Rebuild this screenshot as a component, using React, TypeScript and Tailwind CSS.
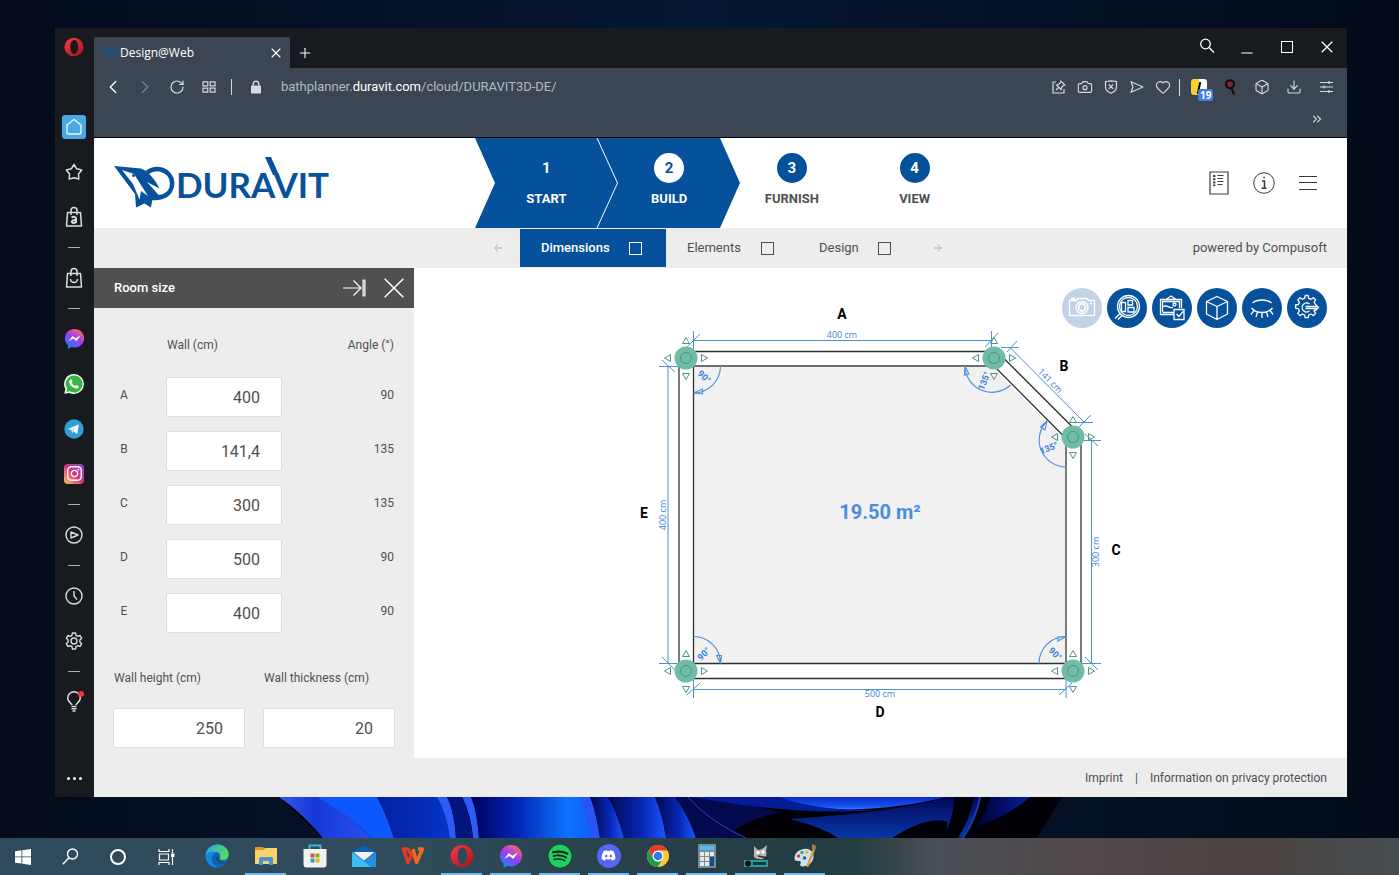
import type { ReactNode } from "react";
import {
  Box,
  Camera,
  ChevronLeft,
  ChevronRight,
  ChevronsRight,
  Download,
  Heart,
  Minus,
  Plus,
  RotateCw,
  X,
} from "lucide-react";
import { FaDiscord, FaSpotify, FaInstagram } from "react-icons/fa";

const walls = [
  { id: "A", length: "400", angle: "90" },
  { id: "B", length: "141,4", angle: "135" },
  { id: "C", length: "300", angle: "135" },
  { id: "D", length: "500", angle: "90" },
  { id: "E", length: "400", angle: "90" },
];

const nodes = [
  [686, 358],
  [994, 358],
  [1073, 437],
  [1073, 671],
  [686, 671],
];

function OperaIcon({ id, size }: { id: string; size: number }) {
  return (
    <svg width={size} height={size} viewBox="0 0 24 24">
      <defs>
        <linearGradient id={id} x1="0" y1="0" x2="1" y2="1">
          <stop offset="0" stopColor="#ff3b4a" />
          <stop offset="1" stopColor="#a3121b" />
        </linearGradient>
      </defs>
      <path
        fill={`url(#${id})`}
        fillRule="evenodd"
        d="M12 1a11.5 11 0 1 0 0 22a11.5 11 0 1 0 0-22zM12.3 3.6c3 0 4.6 3.7 4.6 8.4s-1.600 8.400-4.600 8.400S7.700 16.700 7.700 12s1.600-8.400 4.600-8.400z"
      />
    </svg>
  );
}

function MessengerIcon({ id, size }: { id: string; size: number }) {
  return (
    <svg width={size} height={size} viewBox="0 0 24 24">
      <defs>
        <linearGradient id={id} x1="0.2" y1="1" x2="0.8" y2="0">
          <stop offset="0" stopColor="#0a8dff" />
          <stop offset="0.5" stopColor="#9a3bf5" />
          <stop offset="1" stopColor="#ff6a68" />
        </linearGradient>
      </defs>
      <path fill={`url(#${id})`} d="M12 1C5.500 1 1 5.700 1 11.700c0 3.200 1.300 5.900 3.500 7.800V24l4-2.200c1.100.3 2.300.5 3.500.5 6.500 0 11-4.700 11-10.600S18.500 1 12 1z" />
      <path fill="#fff" d="M5.200 15l4.500-6 3.700 2.700L18.800 8.500 14.300 15l-3.700-2.900z" />
    </svg>
  );
}

function BagIcon({ letter }: { letter?: boolean }) {
  return (
    <svg width="20" height="22" viewBox="0 0 20 22" fill="none" stroke="#d9dde0" strokeWidth="1.500">
      <path d="M3.500 6.500h13l1 13.500h-15z" strokeLinejoin="round" />
      <path d="M7 9V4.500a3 3 0 0 1 6 0V9" />
      {letter ? (
        <path strokeWidth="2" d="M7.500 11.500c1.500-1 4.500-1 4.500 1V17M12 14c-5-.5-5 3-2.500 3 1.500 0 2.500-1 2.500-2" />
      ) : (
        <path d="M6.500 12a3.500 3.500 0 0 0 7 0" />
      )}
    </svg>
  );
}

function SideButton({ label, children }: { label: string; children: ReactNode }) {
  return (
    <button aria-label={label} className="flex h-[45px] w-full items-center justify-center">
      {children}
    </button>
  );
}

function Dash() {
  return (
    <div className="flex h-4 items-center justify-center">
      <span className="h-px w-3 bg-[#a9adb0]" />
    </div>
  );
}

function Sidebar() {
  return (
    <aside className="flex w-[39px] shrink-0 flex-col items-center bg-[#171a1e] pr-px">
      <button aria-label="Opera menu" className="mb-[38px] flex h-[38px] items-center">
        <OperaIcon id="operaSide" size={20} />
      </button>
      <SideButton label="Start page">
        <span className="flex size-6 items-center justify-center rounded-[3px] bg-[#48a9e6]">
          <svg width="18" height="18" viewBox="0 0 18 18" fill="none" stroke="#e6f6ff" strokeWidth="1.400" strokeLinejoin="round">
            <path d="M9 1.500L16 7v7.500a1.500 1.500 0 0 1-1.500 1.500h-11A1.500 1.500 0 0 1 2 14.500V7z" />
          </svg>
        </span>
      </SideButton>
      <SideButton label="Bookmarks">
        <svg width="18" height="18" viewBox="0 0 18 18" fill="none" stroke="#d9dde0" strokeWidth="1.500" strokeLinejoin="round">
          <path d="M9 1.500l2.700 4.300 5 1.200-3.200 4 .3 5L9 14.800 4.200 16l.3-5-3.200-4 5-1.200z" />
        </svg>
      </SideButton>
      <SideButton label="AliExpress">
        <BagIcon letter />
      </SideButton>
      <Dash />
      <SideButton label="Shopping corner">
        <BagIcon />
      </SideButton>
      <Dash />
      <SideButton label="Messenger">
        <MessengerIcon id="messengerSide" size={21} />
      </SideButton>
      <SideButton label="WhatsApp">
        <svg width="20" height="20" viewBox="0 0 20 20">
          <path fill="#f4fff4" d="M10 0a10 10 0 0 1 0 20c-1.700 0-3.300-.4-4.700-1.100L.3 19.700 1.400 15A10 10 0 0 1 10 0z" />
          <path fill="#35b545" d="M10 1.500a8.500 8.500 0 1 1-4.300 15.800L2.400 18l.8-3.200A8.500 8.500 0 0 1 10 1.500z" />
          <path fill="#fff" d="M6.300 5.500c.6-.6 1.200-.3 1.400.1l.8 1.800c.1.400-.6 1-.8 1.300.8 1.600 2 2.700 3.500 3.300.4-.3.900-1.200 1.300-1l1.900.9c.5.3.3 1.500-.3 2-1.200 1-2.800.8-4.800-.3-2.300-1.300-3.500-3-4-4.800-.3-1.300.1-2.400 1-3.300z" />
        </svg>
      </SideButton>
      <SideButton label="Telegram">
        <svg width="20" height="20" viewBox="0 0 20 20">
          <circle cx="10" cy="10" r="9.700" fill="#2f9fd6" />
          <path fill="#fff" d="M3.800 10L14.800 5.500l-1.600 9.500-4-2.700-.9 2-.9-3.200z" />
          <path fill="#b9d9ea" d="M7.400 11.100l5-3.600-3.600 4.600-.5 2.200z" />
        </svg>
      </SideButton>
      <SideButton label="Instagram">
        <span className="flex size-5 items-center justify-center rounded-[4px] bg-linear-to-tr from-[#fdc04a] via-[#d92e7f] to-[#7a3bd0]">
          <FaInstagram size={17} color="#fff" />
        </span>
      </SideButton>
      <Dash />
      <SideButton label="Player">
        <svg width="18" height="18" viewBox="0 0 18 18" fill="none" stroke="#d9dde0" strokeWidth="1.400" strokeLinejoin="round">
          <circle cx="9" cy="9" r="8" />
          <path d="M6 6l7 3-7 3z" />
        </svg>
      </SideButton>
      <Dash />
      <SideButton label="History">
        <svg width="18" height="18" viewBox="0 0 18 18" fill="none" stroke="#d9dde0" strokeWidth="1.400">
          <circle cx="9" cy="9" r="8" />
          <path d="M9 4v5l3 3.500" />
        </svg>
      </SideButton>
      <SideButton label="Settings">
        <svg width="20" height="20" viewBox="0 0 20 20" fill="none" stroke="#d9dde0" strokeWidth="1.400" strokeLinejoin="round">
          <path d="M8 4.300L8.400 2h3.200l.4 2.300 1.900 1.100 2.200-.9 1.600 2.800L15.900 9v2l1.800 1.700-1.600 2.800-2.200-.9-1.900 1.100-.4 2.300H8.400L8 15.700l-1.900-1.100-2.200.9-1.600-2.800L4.100 11V9L2.300 7.300l1.600-2.800 2.200.9z" />
          <circle cx="10" cy="10" r="3" />
        </svg>
      </SideButton>
      <Dash />
      <SideButton label="Tips">
        <svg width="20" height="22" viewBox="0 0 20 22" fill="none" stroke="#d9dde0" strokeWidth="1.500">
          <path d="M8 14c0-1.500-4.300-2.500-4.300-7A6.300 6.300 0 0 1 16.300 7C16.300 11.500 12 12.500 12 14" />
          <path d="M7.500 15.500h5M7.500 17.700h5M8.500 20h3" />
          <circle cx="17" cy="3" r="3" fill="#f0382e" stroke="none" />
        </svg>
      </SideButton>
      <button aria-label="More" className="mt-auto flex h-[38px] items-center gap-[3px]">
        <span className="size-[3px] rounded-full bg-white" />
        <span className="size-[3px] rounded-full bg-white" />
        <span className="size-[3px] rounded-full bg-white" />
      </button>
    </aside>
  );
}

function TabBar() {
  return (
    <div className="flex h-10 items-end bg-[#171a1e] text-white">
      <div className="flex h-[31px] w-[196px] items-center rounded-t-[2px] bg-[#3b4652] pr-[6px] pl-2">
        <svg width="16" height="12" viewBox="0 0 16 12" fill="none" stroke="#10518f" strokeWidth="1.800">
          <path d="M1 1l6 2 2 4M3 3l2 7 3-2M9 3a4 4 0 1 1 0 6" />
        </svg>
        <span className="ml-[2px] flex-1 text-[12px]">Design@Web</span>
        <button aria-label="Close tab">
          <X size={16} strokeWidth={1.6} />
        </button>
      </div>
      <button aria-label="New tab" className="flex h-[31px] w-[30px] items-center justify-center">
        <Plus size={16} strokeWidth={1.6} />
      </button>
      <div className="ml-auto flex h-[38px] self-start">
        <button aria-label="Search tabs" className="flex w-10 items-center justify-center pb-[2px]">
          <svg width="16" height="16" viewBox="0 0 16 16" fill="none" stroke="currentColor" strokeWidth="1.300">
            <circle cx="6.500" cy="6" r="4.800" />
            <path d="M10 9.500l5 5" />
          </svg>
        </button>
        <button aria-label="Minimize" className="flex w-10 items-center justify-center pt-3">
          <Minus size={18} strokeWidth={1.5} />
        </button>
        <button aria-label="Maximize" className="flex w-10 items-center justify-center">
          <span className="size-3 border border-white" />
        </button>
        <button aria-label="Close" className="flex w-10 items-center justify-center">
          <X size={20} strokeWidth={1.4} />
        </button>
      </div>
    </div>
  );
}

function AddressBar() {
  return (
    <div className="border-b border-black bg-[#3b4652] text-[#d5dade]">
      <div className="flex h-[38px] items-center pr-[5px] pl-[3px]">
        <button aria-label="Back" className="flex w-8 justify-center text-white">
          <ChevronLeft size={22} strokeWidth={1.4} />
        </button>
        <button aria-label="Forward" className="flex w-8 justify-center text-[#78818a]">
          <ChevronRight size={22} strokeWidth={1.4} />
        </button>
        <button aria-label="Reload" className="flex w-8 justify-center">
          <RotateCw size={16} strokeWidth={1.8} />
        </button>
        <button aria-label="Speed dial" className="flex w-8 justify-center">
          <svg width="14" height="12" viewBox="0 0 14 12" fill="none" stroke="currentColor" strokeWidth="1.200">
            <path d="M1 .8h4.800v4H1zM8.200.8H13v4H8.200zM1 7.200h4.800v4H1zM8.200 7.200H13v4H8.200z" />
          </svg>
        </button>
        <span className="mx-[6px] h-4 w-px bg-[#d5dade]" />
        <svg width="12" height="14" viewBox="0 0 12 14" className="ml-3">
          <path d="M3.200 6V4a2.800 2.800 0 0 1 5.600 0v2" fill="none" stroke="#d5dade" strokeWidth="1.400" />
          <rect x="1" y="5.500" width="10" height="8" rx="1" fill="#d5dade" />
        </svg>
        <p className="ml-[19px] flex-1 font-[Roboto,sans-serif] text-[13px] whitespace-nowrap text-[#b3bac1]">
          bathplanner.<span className="text-white">duravit.com</span>/cloud/DURAVIT3D-DE/
        </p>
        <button aria-label="Edit page" className="flex w-[26px] justify-center">
          <svg width="14" height="14" viewBox="0 0 14 14" fill="none" stroke="currentColor" strokeWidth="1.200">
            <path d="M4 2H1v11h11V9M4 10l2.500-2.500M9 1.200L12.800 5l-1.500.5L9.500 7.500 9 9.500 4.500 5l2-.5L8.500 2.700z" />
          </svg>
        </button>
        <button aria-label="Snapshot" className="flex w-[26px] justify-center">
          <Camera size={16} strokeWidth={1.7} />
        </button>
        <button aria-label="Ad blocker" className="flex w-[26px] justify-center">
          <svg width="14" height="14" viewBox="0 0 14 14" fill="none" stroke="currentColor" strokeWidth="1.200">
            <path d="M1.500 1.500l5.500-.7 5.500.7V7c0 3-2.500 5-5.500 6.200C4 12 1.500 10 1.500 7zM4.800 4.500l4.400 4.400M9.200 4.500L4.800 8.900" />
          </svg>
        </button>
        <button aria-label="Send" className="flex w-[26px] justify-center">
          <svg width="14" height="12" viewBox="0 0 14 12" fill="none" stroke="currentColor" strokeWidth="1.200" strokeLinejoin="round">
            <path d="M1 .8L13 6 1 11.200 3 6z" />
          </svg>
        </button>
        <button aria-label="Save" className="flex w-[26px] justify-center">
          <Heart size={16} strokeWidth={1.7} />
        </button>
        <span className="mr-1 ml-[3px] h-[17px] w-px bg-[#d5dade]" />
        <button aria-label="Extension, 19 items" className="flex w-[30px] justify-center">
          <span className="relative size-4 rounded-[3px] bg-linear-to-r from-[#fbd22b] from-50% to-white to-50%">
            <span className="absolute top-[3px] left-[7px] h-3 w-[2px] rotate-12 bg-black" />
            <span className="absolute top-[10px] left-[7px] rounded-[2px] bg-[#4180e0] px-[2px] text-[10px] leading-[12px] font-bold text-white">
              19
            </span>
          </span>
        </button>
        <button aria-label="Extension" className="flex w-8 justify-center">
          <svg width="12" height="16" viewBox="0 0 12 16">
            <path d="M7.500 9l2.500 6.500" stroke="#0c0c0e" strokeWidth="2" />
            <circle cx="6" cy="5.300" r="4" fill="#7c2430" stroke="#0c0c0e" strokeWidth="2" />
          </svg>
        </button>
        <button aria-label="Extensions" className="flex w-8 justify-center">
          <Box size={16} strokeWidth={1.7} />
        </button>
        <button aria-label="Downloads" className="flex w-8 justify-center">
          <Download size={16} strokeWidth={1.7} />
        </button>
        <button aria-label="Easy setup" className="flex w-8 justify-center">
          <svg width="13" height="12" viewBox="0 0 13 12" stroke="currentColor" strokeWidth="1.200">
            <path d="M0 1.500h13M0 6h13M0 10.500h13M9 0v3M4 4.500v3M9 9v3" />
          </svg>
        </button>
      </div>
      <div className="flex h-[31px] justify-end pt-[6px] pr-[23px]">
        <button aria-label="More bookmarks" className="h-[14px]">
          <ChevronsRight size={14} strokeWidth={2} />
        </button>
      </div>
    </div>
  );
}

function Logo() {
  return (
    <svg width="224" height="56" viewBox="0 0 224 56" role="img" aria-label="Duravit">
      <g fill="#07529b">
        <path
          fillRule="evenodd"
          d="M0 9L27 11.500C34 14 41 22 45.500 31.500L33 25 46 39.500 42 43 38.500 41.500 37 50.500 30.500 46.500 22 50.500 21 37zM8 13L19 27 25.500 42.500 27 34 34 39 20 17z"
        />
        <circle cx="19.500" cy="18.500" r="1.500" />
        <path d="M151 0h6l8 18h-6z" />
      </g>
      <path d="M33 15.500C38 12 42 11 47 12.500c14 4 15 22 2 27-3 1-7 1.500-12 1.500" fill="none" stroke="#07529b" strokeWidth="4.500" />
      <text x="62" y="41" fill="#07529b" className="font-[Lato,sans-serif] text-[35px] font-bold">
        DURAVIT
      </text>
    </svg>
  );
}

function Step({ num, label, state }: { num: string; label: string; state: "done" | "active" | "todo" }) {
  const circle = { done: "bg-[#05519c] text-white", active: "bg-white text-[#05519c]", todo: "bg-[#05519c] text-white" }[state];
  return (
    <button className="relative flex flex-col items-center gap-2 pt-[15px] pl-5 font-bold">
      <span className={`flex size-[30px] items-center justify-center rounded-full text-[15px] ${circle}`}>{num}</span>
      <span className={`text-[13px] leading-4 ${state === "todo" ? "text-[#505050]" : "text-white"}`}>{label}</span>
    </button>
  );
}

function Header() {
  return (
    <header className="grid h-[90px] grid-cols-[1fr_491px_1fr] bg-white">
      <a href="#" className="pt-[19px] pl-5">
        <Logo />
      </a>
      <nav className="relative grid grid-cols-4">
        <svg className="absolute top-0 left-0" width="265" height="90" viewBox="0 0 265 90">
          <path fill="#05519c" d="M0 0h245l20 45-20 45H0l20-45z" />
          <path fill="none" stroke="#fff" d="M122 0l20.500 45L122 90" />
        </svg>
        <Step num="1" label="START" state="done" />
        <Step num="2" label="BUILD" state="active" />
        <Step num="3" label="FURNISH" state="todo" />
        <Step num="4" label="VIEW" state="todo" />
      </nav>
      <div className="flex items-center justify-end gap-6 pr-[30px]">
        <button aria-label="Product list">
          <svg width="20" height="24" viewBox="0 0 20 24" fill="none" stroke="#3c3c3c">
            <path strokeWidth="1.200" d="M1 1h18v22H1z" />
            <path strokeWidth="2.400" strokeDasharray="2 1.200" d="M5.200 4v11" />
            <path d="M8.500 4.500h6M8.500 7.500h5M8.500 10.500h6M8.500 13.500h5" />
          </svg>
        </button>
        <button aria-label="Information">
          <svg width="22" height="22" viewBox="0 0 22 22" fill="none" stroke="#3c3c3c">
            <circle cx="11" cy="11" r="10.300" />
            <path strokeWidth="1.600" d="M9 9h2.500v7M8.500 16.200h5M10.300 5.500h1.600" />
          </svg>
        </button>
        <button aria-label="Menu">
          <svg width="18" height="14" viewBox="0 0 18 14" stroke="#3c3c3c">
            <path d="M0 .5h18M0 6.500h18M0 13.500h18" />
          </svg>
        </button>
      </div>
    </header>
  );
}

function SubNav() {
  return (
    <div className="grid h-10 grid-cols-[1fr_491px_1fr] items-center bg-[#ededed] text-[13px] text-[#505050]">
      <nav className="col-start-2 flex h-[38px] items-stretch">
        <button aria-label="Previous" className="flex w-[45px] items-center justify-center text-[#b0b0b0]">
          <svg width="8" height="8" viewBox="0 0 8 8" fill="none" stroke="currentColor">
            <path d="M4 .5L.8 4 4 7.500M1 4h7" />
          </svg>
        </button>
        <button className="flex w-[146px] items-center justify-between bg-[#05519c] pr-6 pl-[21px] font-medium text-white">
          Dimensions
          <span className="size-[13px] border border-current" />
        </button>
        <button className="flex w-[132px] items-center justify-between pr-6 pl-[21px]">
          Elements
          <span className="size-[13px] border border-current" />
        </button>
        <button className="flex w-[117px] items-center justify-between pr-6 pl-[21px]">
          Design
          <span className="size-[13px] border border-current" />
        </button>
        <button aria-label="Next" className="flex w-[45px] items-center justify-center text-[#b0b0b0]">
          <svg width="8" height="8" viewBox="0 0 8 8" fill="none" stroke="currentColor">
            <path d="M4 .5L7.200 4 4 7.500M0 4h7" />
          </svg>
        </button>
      </nav>
      <p className="pr-5 text-right">powered by Compusoft</p>
    </div>
  );
}

function RoomPanel() {
  const field = "h-10 rounded-[2px] border border-[#dedede] bg-white pr-[21px] text-right text-[16px] text-[#505050]";
  return (
    <section className="w-80 shrink-0 bg-[#ededed] pb-[10px] text-[12px] text-[#505050]">
      <div className="flex h-10 items-center bg-[#505050] pr-[10px] pl-5 text-white">
        <h2 className="flex-1 text-[13px] font-medium">Room size</h2>
        <button aria-label="Dock panel" className="mr-[18px]">
          <svg width="23" height="18" viewBox="0 0 23 18" fill="none" stroke="#fff" strokeWidth="1.200">
            <path d="M0 9h17.500M10.500 1.500L18 9l-7.500 7.500" />
            <path stroke="#ccd6cf" strokeWidth="3.500" d="M21 .5v17" />
          </svg>
        </button>
        <button aria-label="Close panel">
          <svg width="20" height="20" viewBox="0 0 20 20" stroke="#fff" strokeWidth="1.500">
            <path d="M.7.700l18.600 18.600M19.300.700L.7 19.300" />
          </svg>
        </button>
      </div>
      <table className="mt-3 w-full table-fixed">
        <thead>
          <tr className="h-[50px]">
            <th className="w-[60px]" />
            <th className="w-[140px] pl-[13px] text-left font-normal">Wall (cm)</th>
            <th className="pr-5 text-right font-normal">Angle (°)</th>
          </tr>
        </thead>
        <tbody>
          {walls.map((wall) => (
            <tr key={wall.id} className="h-[54px]">
              <th className="pb-1 text-center font-normal">
                <label htmlFor={`wall-${wall.id}`}>{wall.id}</label>
              </th>
              <td className="pl-3">
                <input id={`wall-${wall.id}`} defaultValue={wall.length} className={`w-[116px] ${field}`} />
              </td>
              <td className="pr-5 pb-1 text-right">{wall.angle}</td>
            </tr>
          ))}
        </tbody>
      </table>
      <div className="mt-[30px] grid grid-cols-2 gap-[18px] px-[19px] leading-4">
        <div className="flex flex-col gap-[22px]">
          <label htmlFor="wall-height" className="pl-px">
            Wall height (cm)
          </label>
          <input id="wall-height" defaultValue="250" className={`w-full ${field}`} />
        </div>
        <div className="flex flex-col gap-[22px]">
          <label htmlFor="wall-thickness" className="pl-px">
            Wall thickness (cm)
          </label>
          <input id="wall-thickness" defaultValue="20" className={`w-full ${field}`} />
        </div>
      </div>
    </section>
  );
}

function RoundButton({ label, disabled, children }: { label: string; disabled?: boolean; children: ReactNode }) {
  return (
    <button
      aria-label={label}
      disabled={disabled}
      className={`size-10 rounded-full ${disabled ? "bg-[#c1d3e6]" : "bg-[#05519c]"}`}
    >
      <svg width="40" height="40" viewBox="0 0 40 40" fill="none" stroke="#fff" strokeWidth="1.300">
        {children}
      </svg>
    </button>
  );
}

function CanvasTools() {
  return (
    <div className="absolute top-5 right-5 flex gap-[5px]">
      <RoundButton label="Screenshot" disabled>
        <path d="M7.500 12.500h7l1.500-2h9l1.500 2h6v15h-25zM9.500 12v-1.500h3V12M28 15.500h2.500" />
        <circle cx="20" cy="19.500" r="6" />
        <circle cx="20" cy="19.500" r="3.500" strokeWidth="1.800" />
      </RoundButton>
      <RoundButton label="Inspect plan">
        <circle cx="21.500" cy="18.500" r="11" />
        <circle cx="21.500" cy="18.500" r="9" />
        <path d="M14.500 14.500h4v9h-4zM21 12.500h4.500v4.500H21zM21 19.500h6v4.500h-6zM13 25.500l-5 5M15 27.500l-4 4" />
      </RoundButton>
      <RoundButton label="Backgrounds">
        <path d="M22 26.500H8.500v-15h21V20M10.500 24V13.500h17V20M22 24.500H10.500M14 11.500l5-3.500 5 3.500M11 18.500c5-2 6 2 10 1" />
        <circle cx="22.500" cy="16.500" r="1.500" />
        <path d="M22 21.500h10v10H22zM24.500 26l2.500 2.500 4-5" />
      </RoundButton>
      <RoundButton label="3D view">
        <path strokeLinejoin="round" d="M20 8.500l10.500 5v12.500L20 31.500 9.500 26V13.500zM9.500 13.500L20 18.500l10.500-5M20 18.500v13" />
      </RoundButton>
      <RoundButton label="Visibility">
        <path d="M10.500 15c5-4 14-4 19 0M9.500 20c5 6 16 6 21 0M20 24.500v5.500M15.500 24l-1.500 5M24.500 24l1.500 5M12 22.500l-3 4M28 22.500l3 4" />
      </RoundButton>
      <RoundButton label="Preferences">
        <path
          strokeLinejoin="round"
          d="M28 16l-.8-2 1.400-2.300-2.300-2L24 11.300l-2.300-1-.5-2.800h-3l-.6 2.800-2.200.9-2.400-1.500-2.200 2.200 1.600 2.400-1 2.200-2.800.5v3.200l2.800.6.9 2.200-1.600 2.400 2.300 2.200 2.400-1.600 2.200 1 .6 2.700h3l.6-2.700 2.200-1 2.400 1.600 2.200-2.200-1.600-2.400.6-1.500"
        />
        <path d="M22.500 16a4.500 4.500 0 1 0 0 7M18.500 18.500H30M18.500 20.500H30M28 16l3.500 3.500L28 23" />
      </RoundButton>
    </div>
  );
}

function FloorPlan() {
  return (
    <svg className="h-[490px] w-full font-[Roboto,sans-serif]" viewBox="414 268 933 490" fill="none">
      <path fill="#f1f1f1" d="M693.500 366H991l75 75v222.500H693.500z" />
      <g stroke="#303030" strokeWidth="1.300">
        <path d="M686 351.500h308M693.500 363v301M686 663.500h387M686 678.500h387" />
        <path d="M994 366l70 70.500M1004 358.500l70 70" />
      </g>
      <path stroke="#6e6e6e" strokeWidth="1.800" d="M693 366h301M679 358v313M1066 441v223M1081 437v234" />

      <g stroke="#4f8fd8">
        <path d="M693.500 340.500h298M693.500 331v20M991.500 331v20M686 348l14-14M985 347l13-14" />
        <path d="M1010.500 348l73.500 74M1001 347.500h18M1007 352l10-11M1075 422.500h18M1078 428l13-13" />
        <path d="M1091.500 440v224M1078 440.500h23M1078 663.500h23M1085 434l13 12M1085 657l13 13" />
        <path d="M693.500 689.500h372.500M693.500 680v18M1066 680v18M687 695l13-12M1059 695l13-12" />
        <path d="M668 366v298M659 366.500h21M659 663.500h21M662 360l13 12M662 657l13 13" />
      </g>

      <g stroke="#4a8ee0" strokeWidth="1.100">
        <path d="M720.500 366a27 27 0 0 1-27 27l9-4v5l-9-1" />
        <path d="M1010.500 385a27 27 0 0 1-45.500-19l-.5 9 4.500-1-4-8" />
        <path d="M1066 467a27 27 0 0 1-19-46l-6.500 6 4.500 3 2-9" />
        <path d="M693.500 636.500a27 27 0 0 1 27 27l-4-8h5l-1 8" />
        <path d="M1039 663.500a27 27 0 0 1 27-27l-8 .5v4l8-4.500" />
      </g>
      <g fill="#3a80dc" textAnchor="middle" className="text-[9px] font-bold">
        <text transform="translate(702 379) rotate(45)">90°</text>
        <text transform="translate(987 382) rotate(-68)">135°</text>
        <text transform="translate(1050 451) rotate(-22)">135°</text>
        <text transform="translate(706 656) rotate(-45)">90°</text>
        <text transform="translate(1053 656) rotate(45)">90°</text>
      </g>
      <g fill="#3f86dc" textAnchor="middle" className="font-['Open_Sans',sans-serif] text-[9px]">
        <text x="842" y="338">400 cm</text>
        <text transform="translate(1048 383) rotate(45)">141 cm</text>
        <text transform="translate(1099 552) rotate(-90)">300 cm</text>
        <text x="880" y="697">500 cm</text>
        <text transform="translate(666 515) rotate(-90)">400 cm</text>
      </g>

      {nodes.map(([x, y]) => (
        <g key={`${x}-${y}`} transform={`translate(${x} ${y})`} stroke="#4f9480">
          <circle r="11.500" fill="#70bca8" stroke="none" />
          <circle r="5.500" />
          <path d="M0-20.500l3.500 6h-7zM0 21.500l3.500-6h-7zM-21.500 0l6-3.500v7zM21.500 0l-6-3.500v7z" />
        </g>
      ))}

      <g fill="#000" textAnchor="middle" className="text-[14px] font-bold">
        <text x="842" y="319">A</text>
        <text x="1064" y="371">B</text>
        <text x="1116" y="555">C</text>
        <text x="880" y="717">D</text>
        <text x="644" y="518">E</text>
      </g>
      <text x="880" y="519" fill="#4a8fdb" textAnchor="middle" className="text-[20px] font-bold">
        19.50 m²
      </text>
    </svg>
  );
}

function Wallpaper() {
  return (
    <svg className="block h-[41px] w-full" viewBox="0 0 1399 41" preserveAspectRatio="none">
      <defs>
        <linearGradient id="petal">
          <stop offset="0" stopColor="#3358f0" />
          <stop offset="0.4" stopColor="#1738d8" />
          <stop offset="1" stopColor="#2a50f0" />
        </linearGradient>
        <linearGradient id="deep">
          <stop offset="0" stopColor="#0220a0" />
          <stop offset="1" stopColor="#0535c8" />
        </linearGradient>
        <linearGradient id="glow">
          <stop offset="0" stopColor="#00005c" />
          <stop offset="0.35" stopColor="#0224b4" />
          <stop offset="0.75" stopColor="#0d74ff" />
          <stop offset="1" stopColor="#0b5af5" />
        </linearGradient>
        <linearGradient id="fold">
          <stop offset="0" stopColor="#02084e" />
          <stop offset="0.6" stopColor="#0728b8" />
          <stop offset="1" stopColor="#1b55ff" />
        </linearGradient>
        <linearGradient id="wave" x1="0" y1="0" x2="0" y2="1">
          <stop offset="0" stopColor="#0a2cc8" />
          <stop offset="0.75" stopColor="#1450f0" />
          <stop offset="1" stopColor="#3a78ff" />
        </linearGradient>
        <linearGradient id="lower" x1="0" y1="0" x2="0" y2="1">
          <stop offset="0" stopColor="#02085a" />
          <stop offset="1" stopColor="#0838a8" />
        </linearGradient>
        <linearGradient id="tail">
          <stop offset="0" stopColor="#000030" />
          <stop offset="1" stopColor="#041ea0" />
        </linearGradient>
      </defs>
      <path fill="#000006" d="M279 0h783l-25 41H323z" />
      <path fill="url(#petal)" d="M279 0h40c20 12 38 26 52 41h-48C312 28 298 13 279 0z" />
      <path fill="#0d57ff" d="M317 0h60c7 12 12 26 17 41h-23C357 26 340 13 317 0z" />
      <path fill="url(#deep)" d="M377 0h61c7 12 11 26 14 41h-58c-5-15-10-29-17-41z" />
      <path fill="#2c5cf5" d="M437 0h10c6 12 8 26 9 41h-6c-2-15-6-29-13-41zM462 0h9c5 12 7 26 8 41h-6c-1-15-5-29-11-41z" />
      <path fill="#02157c" d="M447 0h15c6 12 9 26 11 41h-17c-1-15-3-29-9-41z" />
      <path fill="url(#glow)" d="M471 0h111c8 12 14 26 18 41H479c-1-15-3-29-8-41z" />
      <path fill="#2754f2" d="M580 0h10c5 12 8 26 10 41h-9c-3-15-7-29-11-41z" />
      <path fill="url(#fold)" d="M590 0h18c7 12 12 26 16 41h-24c-2-15-5-29-10-41z" />
      <path fill="url(#fold)" d="M608 0h47c5 12 9 26 11 41h-42c-4-15-9-29-16-41z" />
      <path fill="url(#fold)" d="M655 0h20c9 12 16 26 21 41h-30c-2-15-6-29-11-41z" />
      <path fill="#02094e" d="M675 0h35c30 4 50 10 70 16-20 3-35 10-45 17l10 8h-49c-5-15-12-29-21-41z" />
      <path fill="none" stroke="#2746b8" d="M688 0c14 16 32 29 58 41" />
      <path fill="#041c98" d="M692 0h92c30 8 56 13 90 13-50 4-110 0-182-13z" />
      <path fill="url(#wave)" d="M780 0h166c-30 8-70 13-106 12C815 10 795 6 780 0z" />
      <path fill="url(#lower)" d="M790 22c50-4 110-8 157-22h35c-5 16-10 28-18 41l-20-2c3-6 5-14 2-15-18-4-40 8-54 17h-54c-12-8-28-14-48-19z" />
      <path fill="#000009" d="M954 0h20c-3 16-8 28-16 41h-16c8-12 12-26 12-41z" />
      <path fill="none" stroke="#1a3ca8" strokeWidth="2" d="M980 0c-3 16-9 29-17 41" />
      <path fill="url(#tail)" d="M990 0h40c-16 14-36 24-54 30 7-9 11-19 14-30z" />
    </svg>
  );
}

function TaskButton({ label, open, children }: { label: string; open?: boolean; children: ReactNode }) {
  return (
    <button
      aria-label={label}
      className={`mx-1 flex w-[41px] items-center justify-center border-b-2 ${open ? "border-[#76b9ed]" : "border-transparent"}`}
    >
      {children}
    </button>
  );
}

function Taskbar() {
  return (
    <footer className="flex h-[37px] bg-[linear-gradient(90deg,#2f4a5b_0%,#304c5c_28%,#263f48_48%,#233c40_61%,#4a4f56_67%,#50484a_76%,#4a4240_90%,#454c50_100%)]">
      <button aria-label="Start" className="flex w-[46px] items-center justify-center">
        <svg width="16" height="16" viewBox="0 0 16 16" fill="#fff">
          <path d="M0 2.200L6.500 1.300v6.200H0zM7.300 1.200L16 0v7.500H7.300zM0 8.300h6.500v6.300L0 13.700zM7.300 8.300H16V16l-8.700-1.200z" />
        </svg>
      </button>
      <button aria-label="Search" className="flex w-12 items-center justify-center">
        <svg width="17" height="17" viewBox="0 0 17 17" fill="none" stroke="#fff" strokeWidth="1.400">
          <circle cx="10.500" cy="6" r="5" />
          <path d="M7 9.700L.8 16.200" />
        </svg>
      </button>
      <button aria-label="Cortana" className="flex w-12 items-center justify-center">
        <span className="size-4 rounded-full border-2 border-white" />
      </button>
      <button aria-label="Task view" className="flex w-12 items-center justify-center">
        <svg width="17" height="16" viewBox="0 0 17 16" fill="none" stroke="#fff" strokeWidth="1.200">
          <path d="M1 0v2.500h10V0M1 16v-2.500h10V16M1.500 5h9v6h-9zM14.500 0v4M14.500 8v8" />
          <path fill="#fff" stroke="none" d="M13 4.500h3.500V8H13z" />
        </svg>
      </button>
      <span className="w-[2px]" />
      <TaskButton label="Edge">
        <svg width="24" height="24" viewBox="0 0 24 24">
          <defs>
            <linearGradient id="edge" x1="0" y1="0" x2="1" y2="0.4">
              <stop offset="0" stopColor="#2ba5e8" />
              <stop offset="1" stopColor="#58d863" />
            </linearGradient>
          </defs>
          <circle cx="12" cy="12" r="11.500" fill="#0c63b8" />
          <path fill="url(#edge)" d="M.6 11C1.500 4 7 .5 12.500.5 19 .5 23.700 5 23.700 10.500c0 3.500-2.500 5.500-6 5.500-2.200 0-3.700-.8-3-2 1.300-2 .5-5.500-3.700-6C6 7.300 2 9 .6 11z" />
          <path fill="#1b84d8" d="M.6 11C3 7.500 8 7 11 8.500 6 10 5.500 17 9.500 21c1 1.200 2.500 2 4 2.300C6 24.300.2 18.500.6 11z" />
          <path fill="#2d4857" d="M11.500 12.500c-1 4 2.500 7.500 7.500 7 1.500-.2 3-1 3.500-1.500-2 1-4 .8-6 0-2.500-1-3.500-3-2-4.500z" />
        </svg>
      </TaskButton>
      <TaskButton label="File Explorer" open>
        <svg width="22" height="19" viewBox="0 0 22 19">
          <path fill="#d99b1f" d="M0 1h8l2 2v3H0z" />
          <path fill="#fbd267" d="M0 4h8l2-2h12v16H0z" />
          <path fill="#4696cf" d="M4 19v-6.500A1.500 1.500 0 0 1 5.500 11h11a1.500 1.500 0 0 1 1.500 1.500V19h-4v-4H8v4z" />
        </svg>
      </TaskButton>
      <TaskButton label="Microsoft Store">
        <svg width="24" height="24" viewBox="0 0 24 24">
          <path d="M6.500 6V1.500h11V6" fill="none" stroke="#3fb4dd" strokeWidth="2" />
          <path fill="#f1f2f2" d="M.5 5h23v15.500a3 3 0 0 1-3 3h-17a3 3 0 0 1-3-3z" />
          <path fill="#e1502a" d="M7.500 9.500h4v4h-4z" />
          <path fill="#78b51b" d="M12.500 9.500h4v4h-4z" />
          <path fill="#1e9fe0" d="M7.500 14.500h4v4h-4z" />
          <path fill="#f7b50e" d="M12.500 14.500h4v4h-4z" />
        </svg>
      </TaskButton>
      <TaskButton label="Mail">
        <svg width="24" height="22" viewBox="0 0 24 22">
          <path fill="#0f5fae" d="M0 7l12-7 12 7v3H0z" />
          <path fill="#eef3f8" d="M1.500 7h21L12 16z" />
          <path fill="#1f8fde" d="M0 7l12 8.500L24 7v15H0z" />
          <path fill="#3dbdf2" d="M0 7l19 15H0z" />
        </svg>
      </TaskButton>
      <TaskButton label="WPS Office">
        <svg width="24" height="18" viewBox="0 0 24 18" fill="none" strokeWidth="3.500" strokeLinejoin="round">
          <path stroke="#e23a26" d="M1 2h6l4 7M2.500 2L7 15.500l6-12" />
          <path stroke="#f26a21" d="M12 2l3.500 13.500L21.500 2H17" />
        </svg>
      </TaskButton>
      <TaskButton label="Opera" open>
        <OperaIcon id="operaTask" size={24} />
      </TaskButton>
      <TaskButton label="Messenger" open>
        <MessengerIcon id="messengerTask" size={24} />
      </TaskButton>
      <TaskButton label="Spotify" open>
        <span className="rounded-full bg-[#0b2416]">
          <FaSpotify size={24} color="#1fd15e" />
        </span>
      </TaskButton>
      <TaskButton label="Discord" open>
        <span className="flex size-6 items-center justify-center rounded-full bg-[#5865f2]">
          <FaDiscord size={15} color="#fff" />
        </span>
      </TaskButton>
      <TaskButton label="Chrome" open>
        <svg width="22" height="22" viewBox="0 0 22 22">
          <circle cx="11" cy="11" r="11" fill="#fcc934" />
          <path fill="#e33b2e" d="M1.500 5.500A11 11 0 0 1 20.500 5.500H11L6.200 13.700z" />
          <path fill="#1d9b4c" d="M1.500 5.500L6.200 13.700 11 16.500l3.500-.5L10.500 22A11 11 0 0 1 1.500 5.500z" />
          <circle cx="11" cy="11" r="5.500" fill="#fff" />
          <circle cx="11" cy="11" r="4.300" fill="#2f7cf0" />
        </svg>
      </TaskButton>
      <TaskButton label="Calculator" open>
        <svg width="18" height="24" viewBox="0 0 18 24">
          <rect width="18" height="24" rx="1" fill="#7f8b94" />
          <path fill="#45c4ef" d="M2 2h14v4H2z" />
          <path fill="#e4e8ea" d="M2 8h4v4H2zM7 8h4v4H7zM12 8h4v4h-4zM2 13h4v4H2zM7 13h4v4H7zM2 18h4v4H2zM7 18h4v4H7z" />
          <path fill="#0d4f93" d="M12 13h4v9h-4z" />
        </svg>
      </TaskButton>
      <TaskButton label="GIMP" open>
        <svg width="26" height="24" viewBox="0 0 26 24">
          <path fill="#b6b5ae" d="M11 2l4 4 4-1 5-4-1 6c2 5-2 9-7 8-4 0-6-2-5-5z" />
          <circle cx="15" cy="8.500" r="1.700" fill="#fff" />
          <circle cx="20" cy="8" r="1.700" fill="#fff" />
          <path d="M15 12l9 2" stroke="#2b2b2b" strokeWidth="1.500" />
          <path fill="#2b9a9c" d="M1 16h24v7H1z" />
          <circle cx="5" cy="19.500" r="3" fill="#111" />
          <path fill="#123c44" d="M10 18h13v3H10z" />
        </svg>
      </TaskButton>
      <TaskButton label="Paint" open>
        <svg width="24" height="24" viewBox="0 0 24 24">
          <path fill="#cfe0ee" d="M11 5c6-1 10 3 9.500 8-.5 6-6 9.500-11 9.500-2 0-3-1.500-2-3s0-2.500-2-2.500-4 0-4-3C1.500 9 6 5.500 11 5z" />
          <circle cx="5.500" cy="12" r="1.700" fill="#d64131" />
          <circle cx="9" cy="8.500" r="1.700" fill="#3ca34c" />
          <circle cx="14" cy="8" r="1.700" fill="#e8b32c" />
          <circle cx="11.500" cy="14" r="1.800" fill="#2b5f8f" />
          <path d="M21.500 4L14.500 22" stroke="#d59a4d" strokeWidth="2.200" strokeLinecap="round" />
          <path fill="#a87b4a" d="M19 0l4.500 2-2 4-2.500-1z" />
        </svg>
      </TaskButton>
    </footer>
  );
}

export default function App() {
  return (
    <div className="flex min-h-screen flex-col bg-linear-to-r from-[#030b1b] via-[#071733] to-[#020a18] font-['Open_Sans',sans-serif]">
      <main className="mt-7 mr-[52px] ml-[55px] flex flex-1">
        <Sidebar />
        <div className="flex min-w-0 flex-1 flex-col">
          <TabBar />
          <AddressBar />
          <div className="flex flex-1 flex-col bg-[#ededed] font-[Roboto,sans-serif]">
            <Header />
            <SubNav />
            <div className="flex flex-1">
              <RoomPanel />
              <section className="relative min-w-0 flex-1 bg-white">
                <FloorPlan />
                <CanvasTools />
              </section>
            </div>
            <div className="flex h-[39px] items-center justify-end gap-3 pr-5 text-[12px] text-[#505050]">
              <a href="#imprint">Imprint</a>
              <span>|</span>
              <a href="#privacy">Information on privacy protection</a>
            </div>
          </div>
        </div>
      </main>
      <Wallpaper />
      <Taskbar />
    </div>
  );
}
